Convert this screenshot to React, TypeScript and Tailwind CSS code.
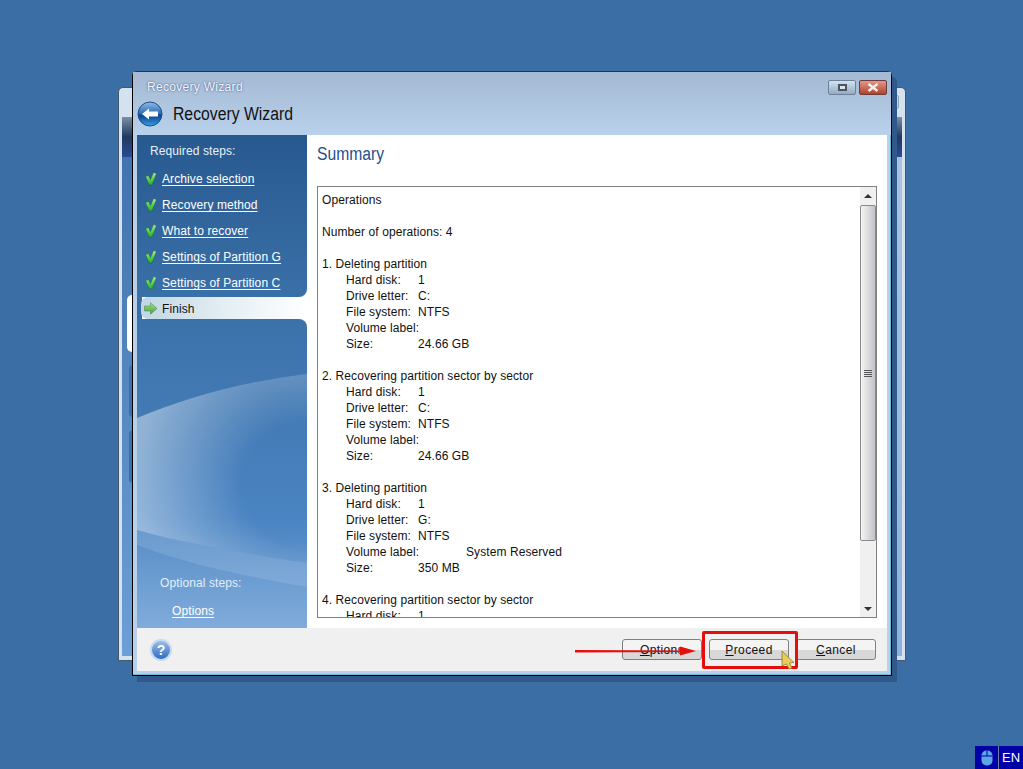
const uiFont = { fontFamily: '"Liberation Sans", Arial, sans-serif' }

const steps = ["Archive selection", "Recovery method", "What to recover", "Settings of Partition G", "Settings of Partition C"]

type Row = { text?: string; label?: string; value?: string; wide?: boolean }

const rows: Row[] = [
  { text: "Operations" },
  {},
  { text: "Number of operations: 4" },
  {},
  { text: "1. Deleting partition" },
  { label: "Hard disk:", value: "1" },
  { label: "Drive letter:", value: "C:" },
  { label: "File system:", value: "NTFS" },
  { label: "Volume label:" },
  { label: "Size:", value: "24.66 GB" },
  {},
  { text: "2. Recovering partition sector by sector" },
  { label: "Hard disk:", value: "1" },
  { label: "Drive letter:", value: "C:" },
  { label: "File system:", value: "NTFS" },
  { label: "Volume label:" },
  { label: "Size:", value: "24.66 GB" },
  {},
  { text: "3. Deleting partition" },
  { label: "Hard disk:", value: "1" },
  { label: "Drive letter:", value: "G:" },
  { label: "File system:", value: "NTFS" },
  { label: "Volume label:", value: "System Reserved", wide: true },
  { label: "Size:", value: "350 MB" },
  {},
  { text: "4. Recovering partition sector by sector" },
  { label: "Hard disk:", value: "1" },
]

function CheckIcon() {
  return (
    <svg width="12" height="14" viewBox="0 0 12 14" className="shrink-0">
      <defs>
        <linearGradient id="checkFill" x1="0" y1="0" x2="0" y2="1">
          <stop offset="0" stopColor="#b4e6a0" />
          <stop offset="0.6" stopColor="#4fd03a" />
          <stop offset="1" stopColor="#2aa83a" />
        </linearGradient>
      </defs>
      <path d="M0.5 4.5 L3.5 3.5 L5.5 7.5 L8.5 0.5 L11.5 1.5 L7 13 L4 13 Z" fill="url(#checkFill)" stroke="#1c5a5c" strokeWidth="0.5" />
    </svg>
  )
}

function BackIcon() {
  return (
    <svg width="26" height="26" viewBox="0 0 26 26">
      <defs>
        <linearGradient id="backFill" x1="0" y1="0" x2="0" y2="1">
          <stop offset="0" stopColor="#8fbce6" />
          <stop offset="0.48" stopColor="#2f6db4" />
          <stop offset="0.55" stopColor="#0f3f8c" />
          <stop offset="1" stopColor="#2ea4e6" />
        </linearGradient>
      </defs>
      <circle cx="13" cy="13" r="12" fill="url(#backFill)" stroke="#1a4f8c" />
      <path d="M5 13 L12 7.5 V10.5 H21 V15.5 H12 V18.5 Z" fill="#fff" />
    </svg>
  )
}

function HelpIcon() {
  return (
    <div className="flex h-[22px] w-[22px] items-center justify-center rounded-full border-2 border-[#c4daf2] bg-gradient-to-b from-[#9dbde8] to-[#2f6cc0] text-[14px] leading-none font-bold text-white">
      ?
    </div>
  )
}

function WizardButton({ mnemonic, after }: { mnemonic: string; after: string }) {
  return (
    <button className="h-[21px] w-[80px] rounded-[3px] border border-[#7f7f7f] bg-gradient-to-b from-[#f4f4f4] from-50% to-[#d8d8d8] to-50% text-center text-[12px] tracking-[0.4px] text-[#111]">
      <span className="underline">{mnemonic}</span>
      {after}
    </button>
  )
}

function BackgroundWindow() {
  return (
    <div className="absolute top-[87px] left-[118px] flex h-[574px] w-[788px] flex-col rounded-t-[5px] border border-[#44586e] bg-[#d4e2f0] px-[3px] pb-[4px]">
      <div className="flex h-[29px] shrink-0 justify-end pt-[7px] pr-[3px]">
        <div className="h-[14px] w-[30px] rounded-[2px] border border-[#8fa3b8] bg-[#c4d4e4]" />
      </div>
      <div className="h-[40px] shrink-0 bg-gradient-to-b from-[#7d8fa6] via-[#203a60] to-[#2c4a96]" />
      <div className="relative flex-1 bg-gradient-to-b from-[#a9c3de] to-[#8fb2dc]">
        <div className="absolute top-0 bottom-0 left-0 w-[11px] bg-gradient-to-b from-[#3f74ae] to-[#6b9fd6]" />
        <div className="absolute top-[138px] left-[5px] h-[57px] w-[6px] rounded-l-[5px] bg-white" />
        <div className="absolute top-[208px] left-[7px] h-[52px] w-[4px] rounded-l-[4px] bg-[#3d6fa8]" />
        <div className="absolute top-[273px] left-[7px] h-[53px] w-[4px] rounded-l-[4px] bg-[#3d6fa8]" />
      </div>
    </div>
  )
}

function Sidebar() {
  return (
    <div className="flex w-[170px] shrink-0 flex-col bg-gradient-to-r from-[#3a6ea7] from-[3%] to-white to-[3%] text-[12px] tracking-[0.1px]">
      <div className="h-[162px] shrink-0 rounded-br-[8px] bg-gradient-to-b from-[#27598f] to-[#3a70a8] pt-[8px] pl-[13px] text-[#e8f0f8]">
        <div className="h-[16px] leading-[16px]">Required steps:</div>
        <div className="mt-[7px] flex flex-col">
          {steps.map((step) => (
            <div key={step} className="-ml-[5px] flex h-[26px] items-center gap-[5px]">
              <CheckIcon />
              <span className="whitespace-nowrap text-white underline underline-offset-2">{step}</span>
            </div>
          ))}
        </div>
      </div>
      <div className="ml-[4px] flex h-[22px] shrink-0 items-center gap-[4px] rounded-l-[7px] bg-gradient-to-r from-[#c0d6e4] via-[#e4eef3] to-white pt-[1px] pl-[3px] text-[#111]">
        <svg width="14" height="13" viewBox="0 0 14 13" className="shrink-0">
          <defs>
            <linearGradient id="finishFill" x1="0" y1="0" x2="0" y2="1">
              <stop offset="0" stopColor="#a6e07a" />
              <stop offset="1" stopColor="#3aa83a" />
            </linearGradient>
          </defs>
          <path d="M0.5 4 H6.5 V0.8 L13 6.5 L6.5 12.2 V9 H0.5 Z" fill="url(#finishFill)" stroke="#5a8a6a" strokeWidth="0.6" />
        </svg>
        <span>Finish</span>
      </div>
      <div className="relative flex-1 overflow-hidden rounded-tr-[8px] bg-gradient-to-b from-[#3c72aa] via-[#4a84c2] via-65% to-[#7aa8da]">
        <svg className="absolute inset-0" width="170" height="309" viewBox="0 0 170 309">
          <defs>
            <radialGradient id="glow" gradientUnits="userSpaceOnUse" cx="165" cy="165" r="170">
              <stop offset="0.35" stopColor="#fff" stopOpacity="0" />
              <stop offset="1" stopColor="#fff" stopOpacity="0.42" />
            </radialGradient>
          </defs>
          <path d="M0 99 C50 78 110 62 170 55 V244 C110 235 50 225 0 211 Z" fill="url(#glow)" />
          <path d="M0 211 C50 225 110 235 170 244 V268 C110 258 50 245 0 226 Z" fill="#fff" fillOpacity="0.16" />
          <path d="M0 226 C50 245 110 258 170 268 V309 H0 Z" fill="#fff" fillOpacity="0.05" />
        </svg>
        <div className="relative pt-[256px] pl-[23px] text-[#e4eef8]">
          <div className="h-[16px] leading-[16px]">Optional steps:</div>
          <div className="mt-[12px] h-[16px] pl-[12px] leading-[16px] text-white underline underline-offset-2">Options</div>
        </div>
      </div>
    </div>
  )
}

function Scrollbar() {
  return (
    <div className="flex w-[16px] shrink-0 flex-col bg-[#f0f0f0]">
      <div className="flex h-[18px] shrink-0 items-center justify-center">
        <div className="h-0 w-0 border-x-[4px] border-b-[4px] border-x-transparent border-b-[#333]" />
      </div>
      <div className="flex h-[336px] shrink-0 items-center justify-center rounded-[2px] border border-[#8a8a8a] bg-gradient-to-r from-[#f6f6f6] to-[#c2c2c8]">
        <div className="flex w-[8px] flex-col gap-[1px]">
          <div className="h-[1px] bg-[#555]" />
          <div className="h-[1px] bg-[#555]" />
          <div className="h-[1px] bg-[#555]" />
          <div className="h-[1px] bg-[#555]" />
        </div>
      </div>
      <div className="flex flex-1 items-end justify-center pb-[6px]">
        <div className="h-0 w-0 border-x-[4px] border-t-[4px] border-x-transparent border-t-[#333]" />
      </div>
    </div>
  )
}

function SummaryBox() {
  return (
    <div className="flex h-[432px] w-[560px] overflow-hidden border border-[#808080] bg-white">
      <div className="h-[430px] flex-1 overflow-hidden pt-[5px] pl-[4px] text-[12px] leading-[16px] tracking-[0.08px] text-[#111]">
        {rows.map((row, i) =>
          row.label ? (
            <div key={i} className="flex h-[16px] pl-[24px] whitespace-nowrap">
              <span className={row.wide ? "w-[120px] shrink-0" : "w-[72px] shrink-0"}>{row.label}</span>
              <span>{row.value}</span>
            </div>
          ) : (
            <div key={i} className="h-[16px]">
              {row.text}
            </div>
          ),
        )}
      </div>
      <Scrollbar />
    </div>
  )
}

function MainWindow() {
  return (
    <div className="absolute top-[71px] left-[132px] flex h-[605px] w-[760px] flex-col rounded-t-[5px] border border-black border-t-[#1c3550] bg-[#b8d0ea] px-[4px] pb-[4px] shadow-[5px_6px_0_0_#30598a,inset_-1px_-1px_0_0_#6fb8d4]">
      <div className="-mx-[4px] flex h-[63px] shrink-0 flex-col bg-gradient-to-b from-[#a4b9d2] to-[#b9d1ec] px-[4px]">
        <div className="flex h-[23px] shrink-0 items-center justify-between pt-[7px]">
          <span className="pl-[10px] text-[12px] tracking-[0.3px] text-[#f4f6fa] [text-shadow:0_0_2px_#1f3f80]">Recovery Wizard</span>
          <div className="flex gap-[3px]">
            <div className="flex h-[15px] w-[28px] items-center justify-center rounded-[2px] border border-[#6d829a] bg-gradient-to-b from-[#d4e2f0] to-[#94abc4]">
              <div className="h-[7px] w-[9px] border-2 border-[#4a5666] bg-[#dbe3ec]" />
            </div>
            <div className="flex h-[15px] w-[28px] items-center justify-center rounded-[2px] border border-[#6e3a3a] bg-gradient-to-b from-[#dc9a8c] to-[#b2402e]">
              <svg width="12" height="9" viewBox="0 0 12 9">
                <path d="M1.5 1 L10.5 8 M10.5 1 L1.5 8" stroke="#f4f0e8" strokeWidth="2.4" />
              </svg>
            </div>
          </div>
        </div>
        <div className="flex flex-1 items-start gap-[10px] pt-[6px]">
          <BackIcon />
          <span className="origin-left scale-x-[0.875] pt-[1px] text-[18px] leading-[24px] whitespace-nowrap text-[#111]">Recovery Wizard</span>
        </div>
      </div>
      <div className="flex h-[493px] shrink-0">
        <Sidebar />
        <div className="flex-1 bg-white pl-[10px]">
          <div className="h-[51px] origin-left scale-x-[0.87] pt-[7px] text-[18px] leading-[24px] text-[#1f4e8c]">Summary</div>
          <SummaryBox />
        </div>
      </div>
      <div className="flex flex-1 items-center justify-between bg-[#f0f0f0] pr-[11px] pl-[13px]">
        <HelpIcon />
        <div className="flex gap-[7px]">
          <WizardButton mnemonic="O" after="ptions" />
          <WizardButton mnemonic="P" after="roceed" />
          <WizardButton mnemonic="C" after="ancel" />
        </div>
      </div>
    </div>
  )
}

export default function App() {
  return (
    <div className="relative h-[769px] w-[1023px] overflow-hidden bg-[#3a6ea5]" style={uiFont}>
      <BackgroundWindow />
      <MainWindow />

      {/* red annotations over the screenshot */}
      <div className="absolute top-[631px] left-[702px] h-[38px] w-[96px] rounded-[2px] border-[3px] border-[#e60d0d]" />
      <svg className="absolute top-[640px] left-[570px]" width="130" height="22" viewBox="0 0 130 22">
        <path d="M5 10 L112 10.5 V12 L5 12.5 Z" fill="#e60d0d" />
        <path d="M110 6.5 L126 11 L110 15.5 Z" fill="#e60d0d" />
      </svg>
      <svg className="absolute top-[650px] left-[780px]" width="16" height="20" viewBox="0 0 16 20">
        <path d="M2 1 L14 12.5 L9.5 13 L12 18 L9 19 L6.5 14 L2 16 Z" fill="#e8cc5a" stroke="#8a7a30" strokeWidth="0.8" />
      </svg>

      <div className="absolute right-0 bottom-0 flex h-[23px] gap-[1px] bg-[#6c7fa8]">
        <div className="flex w-[23px] items-center justify-center bg-[#0000a8]">
          <svg width="12" height="16" viewBox="0 0 12 16">
            <rect x="0.5" y="0.5" width="11" height="15" rx="5" fill="#5ba4e6" />
            <path d="M0.5 6 H11.5 M6 0.5 V6" stroke="#0000a8" />
          </svg>
        </div>
        <div className="flex w-[24px] items-center justify-center bg-[#0000a8] text-[13px] text-white">EN</div>
      </div>
    </div>
  )
}
